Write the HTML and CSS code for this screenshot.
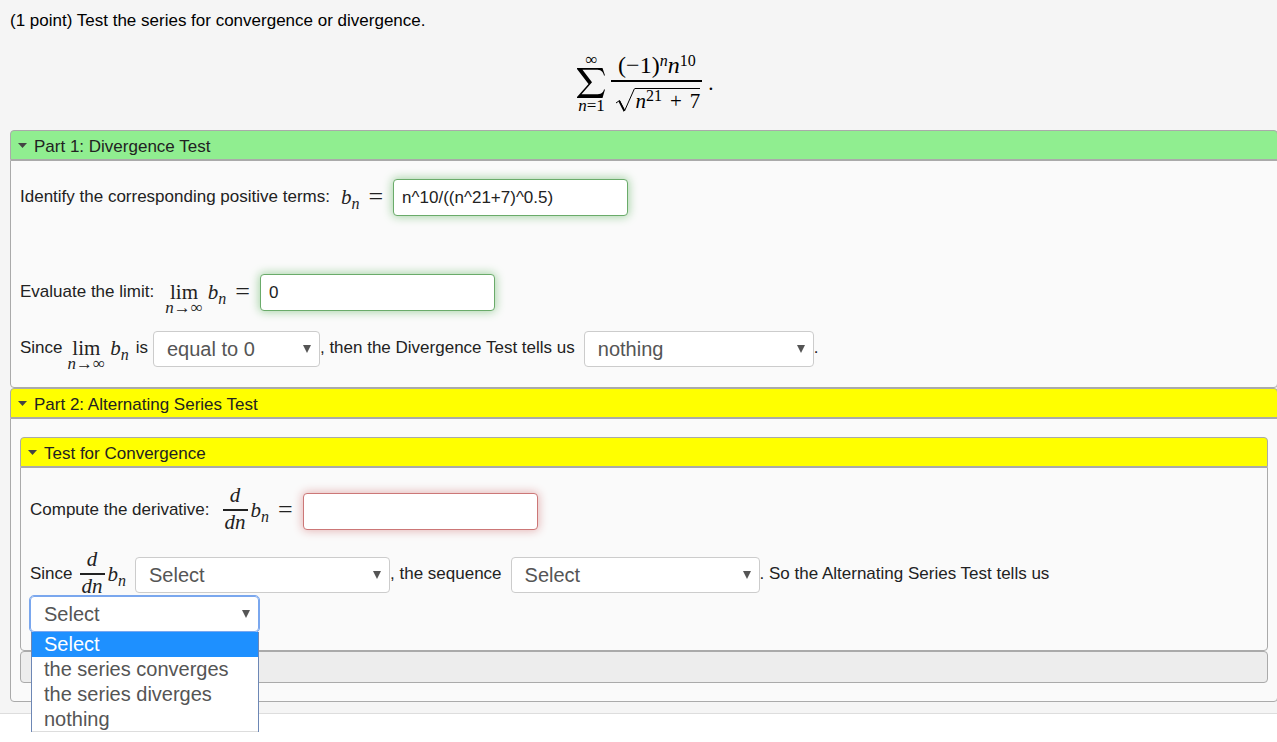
FILE: index.html
```html
<!DOCTYPE html>
<html lang="en">
<head>
<meta charset="utf-8">
<title>Series convergence</title>
<link rel="stylesheet" href="styles.css">
</head>
<body>
<main class="problem">
  <p class="prompt">(1 point) Test the series for convergence or divergence.</p>

  <div class="equation math">
    <span class="sum">
      <span class="bound">∞</span>
      <svg class="sigma" viewBox="0 0 28 30" aria-hidden="true"><path d="M0 0H25.500L28 7.500H27C26 3 23.500 1.800 19 1.800H5.500L15 14.300 4.500 26.300H19C24 26.300 26 25 27 21.500H28L25.500 30H0V29L11.500 16 0 1Z"/></svg>
      <span class="bound"><i>n</i>=1</span>
    </span>
    <span class="quotient">
      <span class="numerator">(−1)<sup><i>n</i></sup><i>n</i><sup>10</sup></span>
      <span class="denominator">
        <svg class="radical" viewBox="0 0 20 25" aria-hidden="true"><path d="M1 15L4.500 12.500 9.500 23 19.500 .5" fill="none" stroke="#000"/><path d="M3.500 13.500L5 12.500 9.800 21.500 8.800 24Z"/></svg>
        <span class="radicand"><i>n</i><sup>21</sup><span class="plus">+</span>7</span>
      </span>
    </span>
    <span>.</span>
  </div>

  <details class="part" open>
    <summary class="bar correct"><svg class="caret" viewBox="0 0 9 5" aria-hidden="true"><path d="M0 0H9L4.500 5Z"/></svg>Part 1: Divergence Test</summary>
    <div class="body part-one">
      <div class="row">
        <label class="lead" for="terms">Identify the corresponding positive terms:</label>
        <span class="math var"><i>b</i><sub><i>n</i></sub></span><span class="math equals">=</span>
        <input class="answer right" id="terms" type="text" value="n^10/((n^21+7)^0.5)">
      </div>
      <div class="row limit-row">
        <label class="lead" for="limit">Evaluate the limit:</label>
        <span class="math lim"><span>lim</span><span class="under"><i>n</i>→∞</span></span>
        <span class="math var"><i>b</i><sub><i>n</i></sub></span><span class="math equals">=</span>
        <input class="answer right" id="limit" type="text" value="0">
      </div>
      <div class="row since-row">
        <span>Since</span>
        <span class="math lim"><span>lim</span><span class="under"><i>n</i>→∞</span></span>
        <span class="math var"><i>b</i><sub><i>n</i></sub></span>
        <label class="before" for="compare">is</label>
        <select class="choice small" id="compare"><option>equal to 0</option></select>
        <label class="after" for="divergence">, then the Divergence Test tells us</label>
        <select class="choice medium" id="divergence"><option>nothing</option></select><span>.</span>
      </div>
    </div>
  </details>

  <details class="part" open>
    <summary class="bar pending"><svg class="caret" viewBox="0 0 9 5" aria-hidden="true"><path d="M0 0H9L4.500 5Z"/></svg>Part 2: Alternating Series Test</summary>
    <div class="body part-two">
      <details open>
        <summary class="bar pending"><svg class="caret" viewBox="0 0 9 5" aria-hidden="true"><path d="M0 0H9L4.500 5Z"/></svg>Test for Convergence</summary>
        <div class="body convergence">
          <div class="row">
            <label class="lead" for="derivative">Compute the derivative:</label>
            <span class="math frac"><i class="upper">d</i><i class="lower">dn</i></span>
            <span class="math var"><i>b</i><sub><i>n</i></sub></span><span class="math equals">=</span>
            <input class="answer wrong" id="derivative" type="text">
          </div>
          <div class="row sign-row">
            <label for="sign">Since</label>
            <span class="math frac"><i class="upper">d</i><i class="lower">dn</i></span>
            <span class="math var"><i>b</i><sub><i>n</i></sub></span>
            <select class="choice large spaced" id="sign"><option>Select</option></select>
            <label class="after" for="sequence">, the sequence</label>
            <select class="choice wide-choice" id="sequence"><option>Select</option></select>
            <label for="result">. So the Alternating Series Test tells us</label>
          </div>
          <div class="picker">
            <select class="choice medium focused" id="result"><option>Select</option></select>
            <ul class="menu" role="listbox" aria-label="Result">
              <li class="item active" role="option" aria-selected="true">Select</li>
              <li class="item" role="option">the series converges</li>
              <li class="item" role="option">the series diverges</li>
              <li class="item" role="option">nothing</li>
            </ul>
          </div>
        </div>
      </details>
      <details>
        <summary class="bar locked" aria-label="Next part"></summary>
      </details>
    </div>
  </details>
</main>
</body>
</html>
```

FILE: styles.css
```css
* {
  box-sizing: border-box;
}

body {
  min-height: 100vh;
  margin: 0;
  overflow-x: hidden;
  background: #fff;
  color: #222;
  font: 17px/20px "Liberation Sans", Arial, sans-serif;
}

.problem {
  padding: 11px 0 11px 10px;
  border-bottom: 1px solid #ddd;
  background: #f5f5f5;
}

.prompt {
  margin: 0;
  color: #000;
}

.math {
  font-family: "Liberation Serif", "Times New Roman", serif;
  font-size: 21px;
  line-height: 22px;
  white-space: nowrap;
}

.math sub,
.math sup {
  font-size: 16px;
  line-height: 0;
}

.math sub {
  vertical-align: -5px;
}

.math sup {
  vertical-align: 7px;
}

/* Display equation */
.equation {
  display: flex;
  justify-content: center;
  align-items: center;
  gap: 6px;
  height: 64px;
  margin: 20px 0 15px;
  padding-left: 4px;
  color: #000;
}

.sum {
  display: flex;
  flex-direction: column;
  align-items: center;
}

.bound {
  font-size: 17px;
  line-height: 14px;
}

.sigma {
  width: 28px;
  height: 30px;
  margin: 1px 0;
}

.quotient {
  display: flex;
  flex-direction: column;
  align-items: center;
}

.numerator {
  padding: 0 5px 3px;
  font-size: 24px;
  line-height: 24px;
}

.denominator {
  display: flex;
  padding: 6px 2px 0 4px;
  border-top: 2px solid #000;
}

.radical {
  width: 20px;
  height: 25px;
}

.radicand {
  border-top: 1px solid #000;
  line-height: 24px;
}

.plus {
  margin: 0 8px;
}

/* Collapsible parts */
.part {
  margin-right: -1px;
}

.bar {
  display: flex;
  align-items: center;
  gap: 7px;
  height: 30px;
  padding: 3px 7px 0;
  border: 1px solid #aaa;
  border-radius: 4px 4px 0 0;
  list-style: none;
  cursor: pointer;
}

.correct {
  background: #90ee90;
}

.pending {
  background: #ff0;
}

.locked {
  height: 32px;
  border-radius: 4px;
  background: #ededed;
}

.caret {
  width: 9px;
  height: 5px;
  margin-bottom: 3px;
  fill: #444;
}

.body {
  border: 1px solid #aaa;
  border-radius: 0 0 4px 4px;
  background: #fafafa;
}

.part-one {
  padding: 18px 9px 20px;
}

.part-two {
  padding: 18px 9px;
}

.convergence {
  padding: 16px 9px 18px;
}

.row {
  display: flex;
  align-items: center;
  white-space: nowrap;
}

.row > label,
.row > span {
  padding-bottom: 2px;
}

.limit-row {
  margin-top: 58px;
}

.since-row {
  margin-top: 20px;
}

.sign-row {
  margin-top: 10px;
}

.lead {
  margin-right: 6px;
}

.var {
  margin-left: 5px;
}

.frac + .var {
  margin-left: 3px;
}

.equals {
  margin: 0 10px 0 9px;
  font-size: 26px;
}

.lim {
  display: flex;
  flex-direction: column;
  align-items: center;
  margin-left: 5px;
}

.under {
  height: 0;
  font-size: 17px;
  line-height: 10px;
}

.frac {
  display: flex;
  flex-direction: column;
  align-items: center;
  margin-left: 7px;
}

.upper {
  padding-bottom: 3px;
}

.lower {
  padding: 0 2px 3px;
  border-top: 2px solid #222;
}

.before {
  margin: 0 5px 0 7px;
}

.after {
  margin-right: 9px;
}

/* Form controls */
.answer {
  width: 235px;
  height: 37px;
  padding: 0 8px;
  border: 1px solid;
  border-radius: 4px;
  background: #fff;
  color: #222;
  font: inherit;
}

.right {
  border-color: #6aab6a;
  box-shadow: 0 0 10px 1px #a5d3a5;
}

.wrong {
  border-color: #c77;
  box-shadow: 0 0 10px 1px #e5b5b5;
}

.choice {
  height: 36px;
  padding: 0 13px;
  border: 1px solid #ccc;
  border-radius: 4px;
  appearance: none;
  background: #fff url("data:image/svg+xml,%3Csvg xmlns='http://www.w3.org/2000/svg' width='8' height='8'%3E%3Cpath d='M0 0H8L4 8Z' fill='%23555'/%3E%3C/svg%3E") no-repeat right 8px center;
  color: #555;
  font: 20px/24px "Liberation Sans", Arial, sans-serif;
}

.small {
  width: 167px;
}

.medium {
  width: 230px;
}

.large {
  width: 255px;
}

.wide-choice {
  width: 249px;
}

.spaced {
  margin-left: 9px;
}

.focused {
  display: block;
  width: 100%;
  outline: 1px solid #7aa7ee;
  border-color: #7aa7ee;
}

.picker {
  position: relative;
  width: 229px;
  margin-top: -6px;
}

.menu {
  position: absolute;
  z-index: 1;
  top: 100%;
  left: 1px;
  right: 0;
  margin: 0;
  padding: 0;
  border: solid #6d87b5;
  border-width: 0 1px;
  background: #fff;
  box-shadow: inset 0 -1px #ddd;
  color: #555;
  font-size: 20px;
  line-height: 25px;
  list-style: none;
}

.item {
  padding: 0 12px;
}

.active {
  background: #1e90ff;
  color: #fff;
}
```
